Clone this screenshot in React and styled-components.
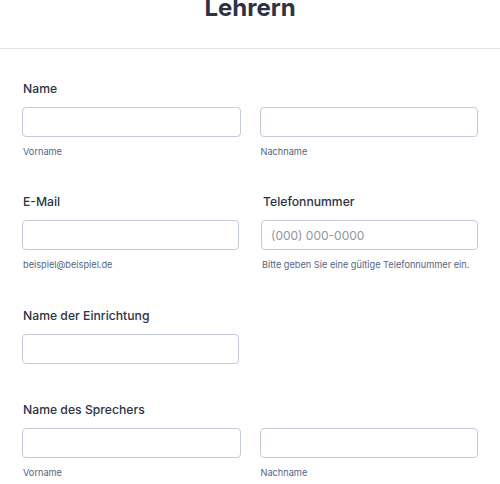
import styled, { createGlobalStyle } from "styled-components";

const GlobalStyle = createGlobalStyle`
  * { box-sizing: border-box; }
  body {
    margin: 0;
    background: #fff;
    font-family: Inter, "Noto Sans", sans-serif;
    color: #2c3345;
    overflow: hidden;
  }
`;

const Header = styled.header`
  padding-bottom: 28px;
  border-bottom: 1px solid #e3e5ee;
  text-align: center;
`;

const Title = styled.h1`
  margin: -4px 0 0;
  font-size: 24px;
  line-height: 24px;
  font-weight: 700;
  color: #2c3345;
`;

const Form = styled.form`
  display: flex;
  flex-direction: column;
  gap: 36px;
  padding: 32px 22px 0;
`;

const Row = styled.div`
  display: grid;
  grid-template-columns: 1fr 1fr;
  column-gap: ${(p) => p.$gap || 19}px;
  margin-bottom: ${(p) => p.$after || 0}px;
`;

const Field = styled.div`
  display: flex;
  flex-direction: column;
  margin-bottom: ${(p) => p.$after || 0}px;
`;

const Label = styled.label`
  display: block;
  padding-left: ${(p) => p.$indent || 1}px;
  margin-bottom: 10px;
  font-size: 12.2px;
  line-height: 16px;
  font-weight: 500;
  color: #2c3345;
`;

const Input = styled.input`
  display: block;
  width: 100%;
  height: 30px;
  padding: 0 9px;
  border: 1px solid #c3cad8;
  border-radius: 4px;
  background: #fff;
  font-family: Inter, "Noto Sans", sans-serif;
  font-size: 12px;
  color: #2c3345;
  outline: none;

  &::placeholder {
    color: #8f96a3;
  }
`;

const SubLabel = styled.span`
  display: block;
  margin-top: 9px;
  padding-left: 1px;
  font-size: 9.2px;
  line-height: 12px;
  color: #57647e;
`;

const Half = styled.div`
  width: calc(50% - 11px);
`;

function SplitName({ label }) {
  return (
    <Field>
      <Label>{label}</Label>
      <Row>
        <div>
          <Input type="text" />
          <SubLabel>Vorname</SubLabel>
        </div>
        <div>
          <Input type="text" />
          <SubLabel>Nachname</SubLabel>
        </div>
      </Row>
    </Field>
  );
}

export default function App() {
  return (
    <>
      <GlobalStyle />
      <Header>
        <Title>Lehrern</Title>
      </Header>
      <Form onSubmit={(e) => e.preventDefault()}>
        <SplitName label="Name" />

        <Row $gap={22} $after={1}>
          <Field>
            <Label>E-Mail</Label>
            <Input type="email" />
            <SubLabel>beispiel@beispiel.de</SubLabel>
          </Field>
          <Field>
            <Label $indent={2}>Telefonnummer</Label>
            <Input type="tel" placeholder="(000) 000-0000" />
            <SubLabel>Bitte geben Sie eine gültige Telefonnummer ein.</SubLabel>
          </Field>
        </Row>

        <Field $after={2}>
          <Label>Name der Einrichtung</Label>
          <Half>
            <Input type="text" />
          </Half>
        </Field>

        <SplitName label="Name des Sprechers" />
      </Form>
    </>
  );
}
